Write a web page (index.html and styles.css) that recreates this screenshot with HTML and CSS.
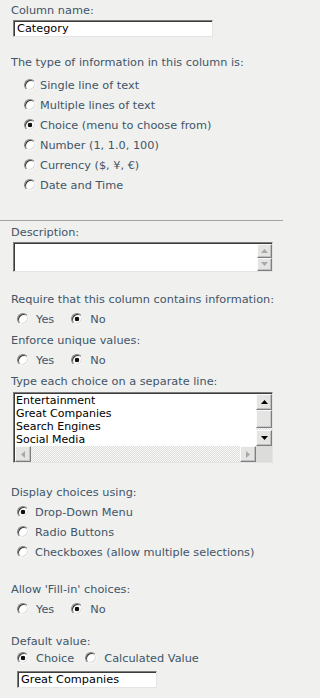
FILE: index.html
```html
<!DOCTYPE html>
<html>
<head>
<meta charset="utf-8">
<title>Column settings</title>
<link rel="stylesheet" href="styles.css">
</head>
<body>
<div class="sec top">
  <div class="lbl">Column name:</div>
  <input class="txt name" type="text" value="Category">
  <div class="lbl m19">The type of information in this column is:</div>
  <div class="opts types">
    <label class="opt"><input class="rb" type="radio" name="t"><span>Single line of text</span></label>
    <label class="opt"><input class="rb" type="radio" name="t"><span>Multiple lines of text</span></label>
    <label class="opt"><input class="rb" type="radio" name="t" checked><span>Choice (menu to choose from)</span></label>
    <label class="opt"><input class="rb" type="radio" name="t"><span>Number (1, 1.0, 100)</span></label>
    <label class="opt"><input class="rb" type="radio" name="t"><span>Currency ($, ¥, €)</span></label>
    <label class="opt"><input class="rb" type="radio" name="t"><span>Date and Time</span></label>
  </div>
</div>
<div class="divider"></div>
<div class="sec">
  <div class="lbl m5">Description:</div>
  <div class="box desc">
    <div class="box-text"></div>
    <div class="vscroll">
      <span class="sbtn dis"><svg width="7" height="4" viewBox="0 0 7 4"><polygon points="0,4 3.5,0 7,4" /></svg></span>
      <span class="sbtn dis"><svg width="7" height="4" viewBox="0 0 7 4"><polygon points="0,0 3.5,4 7,0" /></svg></span>
    </div>
  </div>

  <div class="lbl m21">Require that this column contains information:</div>
  <div class="yn">
    <label class="opt"><input class="rb" type="radio" name="req"><span>Yes</span></label>
    <label class="opt second"><input class="rb" type="radio" name="req" checked><span>No</span></label>
  </div>
  <div class="lbl m6">Enforce unique values:</div>
  <div class="yn">
    <label class="opt"><input class="rb" type="radio" name="uniq"><span>Yes</span></label>
    <label class="opt second"><input class="rb" type="radio" name="uniq" checked><span>No</span></label>
  </div>

  <div class="lbl m6">Type each choice on a separate line:</div>
  <div class="box choices">
    <div class="box-text lines">
      <div>Entertainment</div>
      <div>Great Companies</div>
      <div>Search Engines</div>
      <div>Social Media</div>
    </div>
    <div class="vscroll full">
      <span class="sbtn"><svg width="7" height="4" viewBox="0 0 7 4"><polygon points="0,4 3.5,0 7,4" /></svg></span>
      <span class="thumb"></span>
      <span class="track"></span>
      <span class="sbtn"><svg width="7" height="4" viewBox="0 0 7 4"><polygon points="0,0 3.5,4 7,0" /></svg></span>
    </div>
    <div class="hscroll">
      <span class="sbtn dis"><svg width="4" height="7" viewBox="0 0 4 7"><polygon points="4,0 0,3.5 4,7" /></svg></span>
      <span class="track"></span>
      <span class="sbtn dis"><svg width="4" height="7" viewBox="0 0 4 7"><polygon points="0,0 4,3.5 0,7" /></svg></span>
    </div>
    <div class="corner"></div>
  </div>

  <div class="lbl m23">Display choices using:</div>
  <div class="opts display">
    <label class="opt"><input class="rb" type="radio" name="d" checked><span>Drop-Down Menu</span></label>
    <label class="opt"><input class="rb" type="radio" name="d"><span>Radio Buttons</span></label>
    <label class="opt"><input class="rb" type="radio" name="d"><span>Checkboxes (allow multiple selections)</span></label>
  </div>

  <div class="lbl m21">Allow 'Fill-in' choices:</div>
  <div class="yn">
    <label class="opt"><input class="rb" type="radio" name="fill"><span>Yes</span></label>
    <label class="opt second"><input class="rb" type="radio" name="fill" checked><span>No</span></label>
  </div>

  <div class="lbl m17">Default value:</div>
  <div class="yn def">
    <label class="opt"><input class="rb" type="radio" name="dv" checked><span>Choice</span></label>
    <label class="opt second"><input class="rb" type="radio" name="dv"><span>Calculated Value</span></label>
  </div>
  <input class="txt dflt" type="text" value="Great Companies">
</div>
</body>
</html>
```

FILE: styles.css
```css
html, body {
  margin: 0;
  padding: 0;
  background: #f0f0ee;
}

body {
  font-family: "DejaVu Sans", Verdana, sans-serif;
  font-size: 11.3px;
  color: #3f5569;
  width: 283px;
  overflow: hidden;
}

* {
  box-sizing: border-box;
}

.sec {
  padding-left: 11px;
}

.sec.top {
  padding-top: 4px;
}

.lbl {
  height: 14px;
  line-height: 14px;
  white-space: nowrap;
}

.m5 { margin-top: 5px; }
.m6 { margin-top: 6px; }
.m17 { margin-top: 17px; }
.m19 { margin-top: 19px; }
.m21 { margin-top: 21px; }
.m23 { margin-top: 23px; }

.txt {
  display: block;
  height: 17px;
  margin: 2px 0 0 2px;
  padding: 0 0 0 3px;
  border: 1px solid;
  border-color: #7c7c7c #e4e4e4 #e4e4e4 #7c7c7c;
  box-shadow: inset 1px 1px 0 #3c3c3c;
  background: #fff;
  font-family: "DejaVu Sans", Verdana, sans-serif;
  font-size: 11.3px;
  color: #000;
  outline: none;
}

.txt.name {
  width: 200px;
}

.txt.dflt {
  width: 140px;
  margin: 4px 0 0 6px;
}

.opt {
  display: flex;
  align-items: center;
  white-space: nowrap;
}

.rb {
  -webkit-appearance: none;
  appearance: none;
  flex: none;
  width: 12px;
  height: 12px;
  margin: 0;
  border-radius: 50%;
  border: 1px solid;
  border-color: #858585 #f6f6f6 #f6f6f6 #858585;
  box-shadow: inset 1px 1px 0 #3a3a3a, inset -1px -1px 0 #dcdcdc;
  background: #fff;
}

.rb:checked {
  background: radial-gradient(circle at 50% 50%, #111 0 2px, #fff 2.6px);
}

.opts {
  display: flex;
  flex-direction: column;
}

.opts .opt {
  height: 20px;
}

.types {
  margin-top: 5px;
  padding-left: 13px;
}

.types .opt {
  gap: 4px;
}

.display {
  margin-top: 2px;
  padding-left: 6px;
}

.display .opt {
  gap: 6px;
}

.yn {
  display: flex;
  align-items: center;
  height: 18px;
  margin-top: 3px;
  padding-left: 6px;
}

.yn .opt {
  gap: 7px;
}

.yn .opt.second {
  margin-left: 17px;
}

.yn.def {
  margin-top: 0;
}

.yn.def .opt.second {
  margin-left: 11px;
}

.divider {
  margin-top: 25px;
  height: 1px;
  background: #a4a4a4;
}

/* text areas */
.box {
  margin-left: 2px;
  width: 260px;
  border: 1px solid;
  border-color: #7c7c7c #e4e4e4 #e4e4e4 #7c7c7c;
  box-shadow: inset 1px 1px 0 #3c3c3c;
  background: #fff;
  padding: 1px 0 0 1px;
}

.desc {
  margin-top: 2px;
  height: 30px;
  display: flex;
}

.desc .box-text {
  flex: 1;
}

.vscroll {
  width: 15px;
  display: flex;
  flex-direction: column;
}

.desc .vscroll .sbtn {
  height: 14px;
}

.sbtn {
  display: flex;
  align-items: center;
  justify-content: center;
  background: #e4e4e2;
  border: 1px solid;
  border-color: #fbfbfb #7e7e7e #7e7e7e #fbfbfb;
  box-shadow: inset -1px -1px 0 #c0c0c0;
}

.sbtn svg {
  display: block;
  fill: #000;
}

.sbtn.dis svg {
  fill: #a8a8a8;
}

.choices {
  margin-top: 3px;
  height: 71px;
  display: grid;
  grid-template-columns: 1fr 16px;
  grid-template-rows: 1fr 16px;
}

.lines {
  overflow: hidden;
  padding: 0 0 0 1px;
  font-family: "DejaVu Sans", Verdana, sans-serif;
  font-size: 11px;
  line-height: 13px;
  color: #000;
}

.choices .vscroll {
  width: 16px;
}

.vscroll.full .sbtn {
  height: 16px;
}

.thumb {
  height: 18px;
  background: #e4e4e2;
  border: 1px solid;
  border-color: #fbfbfb #7e7e7e #7e7e7e #fbfbfb;
  box-shadow: inset -1px -1px 0 #c8c8c8;
}

.track {
  flex: 1;
  background: repeating-conic-gradient(#f7f7f6 0 25%, #dedede 0 50%) 0 0 / 2px 2px;
}

.hscroll {
  display: flex;
  height: 16px;
}

.hscroll .sbtn {
  width: 16px;
}

.corner {
  background: #dcdcda;
}
```
